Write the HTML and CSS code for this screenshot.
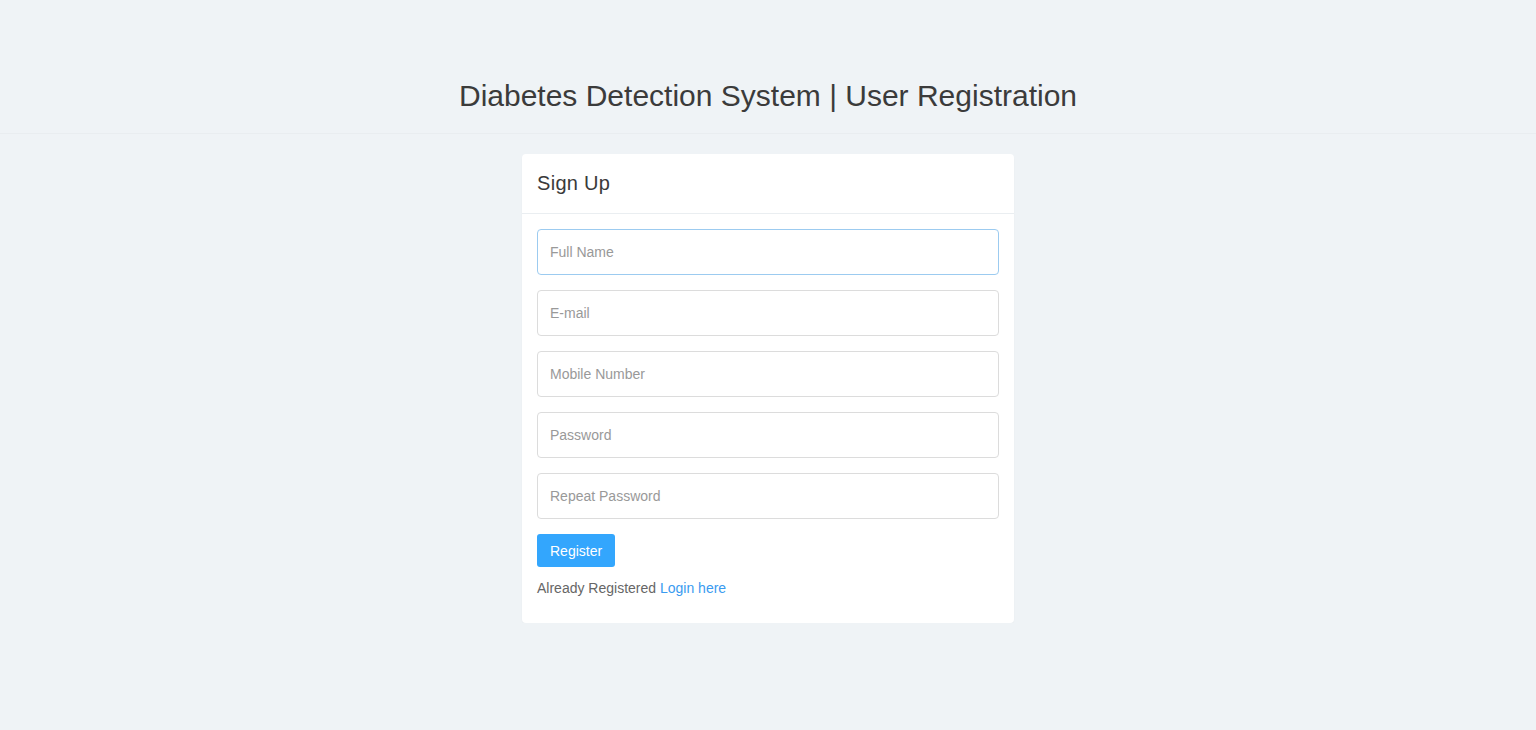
FILE: index.html
```html
<!DOCTYPE html>
<html>
<head>
  <meta charset="UTF-8">
  <title>Diabetes Detection System | User Registration</title>
  <link rel="stylesheet" href="styles.css">
</head>
<body>
  <div class="row">
    <div class="col">
      <div class="page-header">
        <h1>Diabetes Detection System | User Registration</h1>
      </div>
    </div>
  </div>

  <div class="panel">
    <div class="panel-heading">
      <h3 class="panel-title">Sign Up</h3>
    </div>
    <div class="panel-body">
      <form action="#" method="POST">
        <input type="text" name="name" placeholder="Full Name" class="focused" autofocus>
        <input type="email" name="email" placeholder="E-mail">
        <input type="text" name="mobile" placeholder="Mobile Number">
        <input type="password" name="password" placeholder="Password">
        <input type="password" name="password2" placeholder="Repeat Password">
        <button type="submit">Register</button>
      </form>
      <p class="login">Already Registered <a href="#">Login here</a></p>
    </div>
  </div>
</body>
</html>
```

FILE: styles.css
```css
* {
  box-sizing: border-box;
}

body {
  margin: 0;
  font-family: "Liberation Sans", Arial, sans-serif;
  font-size: 14px;
  line-height: 1.42857;
  color: #333;
  background: #eff3f6;
}

.row {
  margin: 0 -15px;
}

.col {
  padding: 0 15px;
}

.page-header {
  padding: 79px 0 21px;
  margin: 0 -15px 20px;
  border-bottom: 1px solid #e9edf0;
  text-align: center;
}

h1 {
  margin: 0;
  font-size: 30px;
  font-weight: normal;
  line-height: 33px;
  color: #3b3b3b;
}

.panel {
  width: 492px;
  margin: 0 auto;
  background: #fff;
  border-radius: 4px;
  box-shadow: 0 1px 2px rgba(0, 0, 0, 0.03);
}

.panel-heading {
  padding: 18px 15px 19px;
  border-bottom: 1px solid #eaeef1;
}

.panel-title {
  margin: 0;
  font-size: 20px;
  font-weight: normal;
  line-height: 22px;
  letter-spacing: 0.3px;
  color: #3a3a3a;
}

.panel-body {
  padding: 15px;
}

input {
  display: block;
  width: 100%;
  height: 46px;
  padding: 10px 12px;
  margin-bottom: 15px;
  border: 1px solid #dcdcdc;
  border-radius: 4px;
  font-family: inherit;
  font-size: 14px;
  color: #555;
  outline: none;
}

input::placeholder {
  color: #999;
}

input.focused,
input:focus {
  border-color: #9ccbf0;
}

button {
  display: block;
  height: 33px;
  padding: 0 13px;
  border: none;
  border-radius: 3px;
  background: #33a6fd;
  color: #fff;
  font-family: inherit;
  font-size: 14px;
  cursor: pointer;
}

.login {
  margin: 12px 0 9px;
  color: #666;
}

.login a {
  color: #3a9bf0;
  text-decoration: none;
}
```
